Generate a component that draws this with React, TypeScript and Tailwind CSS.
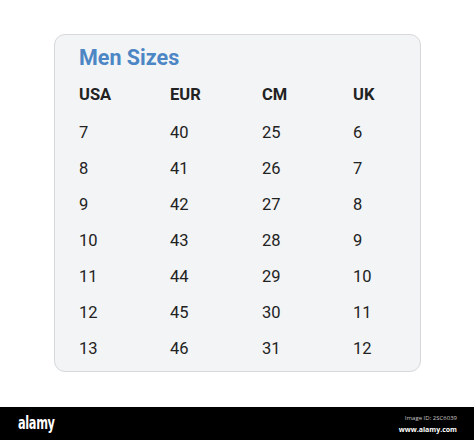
const rows = [
  ["7", "40", "25", "6"],
  ["8", "41", "26", "7"],
  ["9", "42", "27", "8"],
  ["10", "43", "28", "9"],
  ["11", "44", "29", "10"],
  ["12", "45", "30", "11"],
  ["13", "46", "31", "12"],
]

const headers = ["USA", "EUR", "CM", "UK"]

export default function App() {
  return (
    <div className="w-[474px] h-[440px] bg-white flex flex-col font-['Roboto',sans-serif]">
      <div className="h-[34px]" />
      <div className="ml-[54px] w-[367px] h-[338px] rounded-[11px] border border-[#d6d8db] bg-[#f3f4f6] pl-[24px] pt-[9px]">
        <h1 className="text-[21.5px] leading-[28px] font-bold text-[#4c86c4]">Men Sizes</h1>
        <div className="mt-[11px] grid grid-cols-[91px_92px_91px_60px] gap-y-[12px] text-[16.5px] leading-[24px] text-[#222]">
          {headers.map((h) => (
            <div key={h} className="font-bold">
              {h}
            </div>
          ))}
          {rows.map((r, ri) =>
            r.map((c, i) => (
              <div key={r[0] + "-" + i} className={ri === 0 ? "mt-[2px]" : ""}>
                {c}
              </div>
            ))
          )}
        </div>
      </div>
      <div className="h-[35px]" />
      <div className="h-[33px] bg-black flex items-center justify-between pl-[18px] pr-[17px]">
        <span className="text-white font-bold text-[18px] leading-none tracking-[-0.5px] font-['DejaVu_Sans_Condensed','DejaVu_Sans',sans-serif] -mt-[2px] scale-x-[0.7] origin-left">
          alamy
        </span>
        <div className="flex flex-col items-end leading-none font-['Open_Sans',sans-serif]">
          <span className="text-[6px] text-[#c8c8c8]">Image ID: 2SC6039</span>
          <span className="mt-[5px] text-[7px] font-bold text-white">www.alamy.com</span>
        </div>
      </div>
    </div>
  )
}
